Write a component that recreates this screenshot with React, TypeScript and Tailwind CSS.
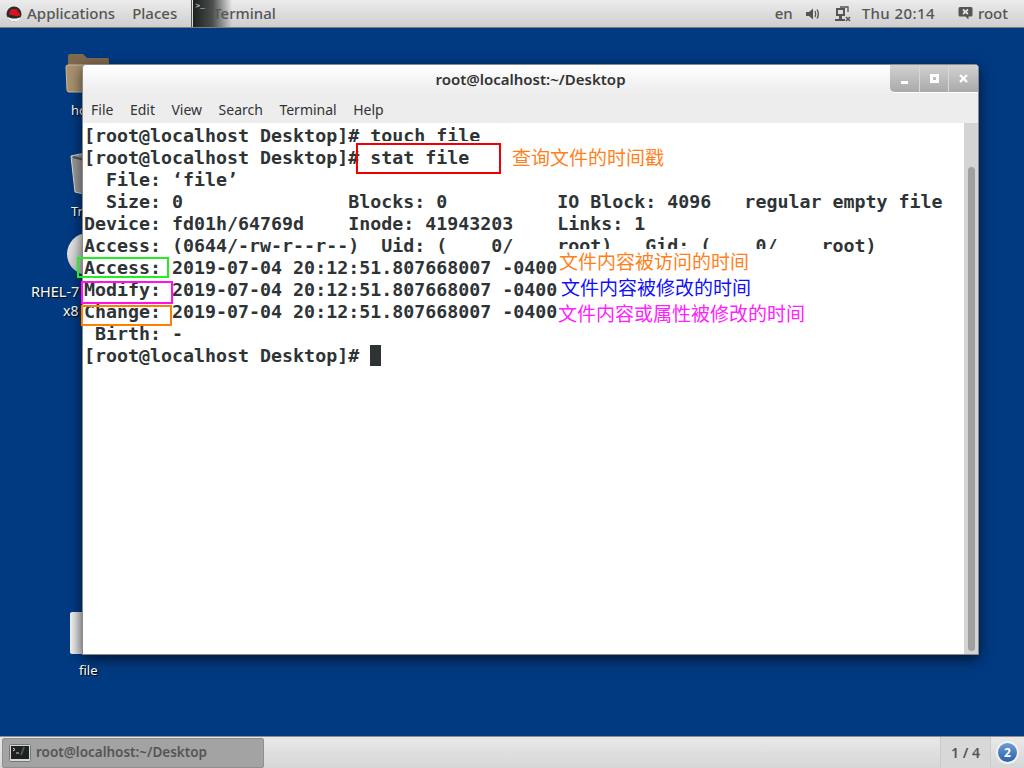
const termLines = [
  "[root@localhost Desktop]# touch file",
  "[root@localhost Desktop]# stat file",
  "  File: ‘file’",
  "  Size: 0               Blocks: 0          IO Block: 4096   regular empty file",
  "Device: fd01h/64769d    Inode: 41943203    Links: 1",
  "Access: (0644/-rw-r--r--)  Uid: (    0/    root)   Gid: (    0/    root)",
  "Access: 2019-07-04 20:12:51.807668007 -0400",
  "Modify: 2019-07-04 20:12:51.807668007 -0400",
  "Change: 2019-07-04 20:12:51.807668007 -0400",
  " Birth: -",
  "[root@localhost Desktop]# ",
];

function RedHat() {
  return (
    <svg width="16" height="16" viewBox="0 0 16 16" className="shrink-0">
      <circle cx="8" cy="8" r="7.5" fill="#2a2a2a" />
      <path d="M1 10.5 C4 13 12 13.5 15 10.5 C14 14.5 11 15.5 8 15.5 C5 15.5 2 14 1 10.5 Z" fill="#f4f4f4" />
      <path d="M3 8.5 C3.5 6.5 4 3.5 6 3 C7.5 2.7 8 3.7 9.5 3 C11 2.6 11.5 4.5 12 6 C13 6.7 14.5 7.5 14 9 C13.5 10.5 11 10.5 8 9.5 C6 8.8 3.5 9.5 3 8.5 Z" fill="#d9141c" />
    </svg>
  );
}

function TermIcon() {
  return (
    <svg width="22" height="18" viewBox="0 0 22 18" className="shrink-0">
      <rect x="0.5" y="0.5" width="21" height="17" rx="1" fill="#d8d8d8" stroke="#777" />
      <rect x="2" y="2" width="18" height="13" fill="#1c2220" />
      <path d="M4 4 L6 5.5 L4 7" fill="none" stroke="#ddd" />
      <path d="M7 9 H10" stroke="#ccc" />
      <path d="M12 11 L15 3" stroke="#555" strokeWidth="2" />
    </svg>
  );
}

function TopBar() {
  return (
    <div className="flex h-[28px] items-center border-b border-[#7d7d7d] bg-gradient-to-b from-[#ececec] to-[#cfcfcf] text-[15px] font-medium text-[#555] font-['Noto_Sans',sans-serif]">
      <div className="ml-[6px] flex items-center gap-[5px]">
        <RedHat />
        <span>Applications</span>
      </div>
      <span className="ml-[17px]">Places</span>
      <div className="ml-[14px] h-full w-[1px] bg-[#555]" />
      <div className="relative ml-[1px] flex h-full w-[120px] items-center">
        <div className="absolute inset-y-0 left-0 w-[39px] bg-gradient-to-r from-[#1c2220] via-[#4a4f4c] to-transparent">
          <span className="absolute left-[2px] top-[1px] font-['Liberation_Mono',monospace] text-[8px] leading-[10px] text-white">&gt;_</span>
        </div>
        <span className="relative ml-[20px]">Terminal</span>
      </div>
      <div className="ml-auto flex items-center">
        <span>en</span>
        <svg width="16" height="14" viewBox="0 0 16 14" className="ml-[12px]">
          <path d="M1 5 H4 L8 1.5 V12.5 L4 9 H1 Z" fill="#555" />
          <path d="M10 4 C11 6 11 8 10 10 M12 2.5 C13.8 5.5 13.8 8.5 12 11.5" fill="none" stroke="#555" strokeWidth="1.3" />
        </svg>
        <svg width="18" height="16" viewBox="0 0 18 16" className="ml-[12px]">
          <path d="M4 3 H11 V9 H4 Z" fill="none" stroke="#555" strokeWidth="2" />
          <path d="M7 1 H15 V6" fill="none" stroke="#555" strokeWidth="1.3" />
          <path d="M2 13 H12 V15 H2 Z M6 10 H9 V13 H6 Z" fill="#555" />
          <path d="M13 11 L17 15 M17 11 L13 15" stroke="#555" strokeWidth="1.5" />
        </svg>
        <span className="ml-[11px] tracking-[0.4px]">Thu 20:14</span>
        <svg width="15" height="15" viewBox="0 0 15 15" className="ml-[23px]">
          <path d="M2 1 H13 A1.500 1.500 0 0 1 14.500 2.500 V9 A1.500 1.500 0 0 1 13 10.500 H10.500 V13.500 L7.500 10.500 H2 A1.500 1.500 0 0 1 0.500 9 V2.500 A1.500 1.500 0 0 1 2 1 Z" fill="#555" />
          <path d="M5 3.500 L10 8 M10 3.500 L5 8" stroke="#e4e4e4" strokeWidth="1.700" />
        </svg>
        <span className="ml-[5px] mr-[16px]">root</span>
      </div>
    </div>
  );
}

function DesktopIcons() {
  return (
    <>
      <svg width="46" height="44" viewBox="0 0 46 44" className="absolute left-[65px] top-[24px]">
        <path d="M3 4 Q3 2 5 2 H18 L22 6 H42 Q44 6 44 8 V20 H3 Z" fill="#7f6a4e" />
        <path d="M1 15 Q1 13 3 13 H43 Q45 13 45 15 L44 38 Q44 40 42 40 H4 Q2 40 2 38 Z" fill="#a8926f" stroke="#cdbb9b" />
      </svg>
      <span className="absolute left-[71px] top-[74px] text-[13px] leading-[16px] text-white [text-shadow:1px_1px_1px_#000]">ho</span>
      <svg width="40" height="44" viewBox="0 0 40 44" className="absolute left-[68px] top-[124px]">
        <path d="M3 4 Q20 -1 37 4 L33 40 Q20 44 7 40 Z" fill="#9a9a9a" stroke="#ddd" />
        <path d="M5 5 Q20 10 35 5" fill="none" stroke="#555" strokeWidth="2" />
      </svg>
      <span className="absolute left-[71px] top-[175px] text-[13px] leading-[16px] text-white [text-shadow:1px_1px_1px_#000]">Tr</span>
      <div className="absolute left-[67px] top-[205px] h-[42px] w-[42px] rounded-full bg-gradient-to-br from-[#f2f2f2] to-[#a9a9a9]" />
      <span className="absolute left-[31px] top-[255px] text-[14.500px] leading-[16px] text-white [text-shadow:1px_1px_1px_#000]">RHEL-7</span>
      <span className="absolute left-[63px] top-[275px] text-[14px] leading-[16px] text-white [text-shadow:1px_1px_1px_#000]">x8</span>
      <div className="absolute left-[70px] top-[584px] h-[42px] w-[30px] rounded-[2px] bg-gradient-to-r from-[#f4f4f4] to-[#9d9d9d]" />
      <span className="absolute left-[79px] top-[634px] text-[13px] leading-[16px] text-white [text-shadow:1px_1px_1px_#000]">file</span>
    </>
  );
}

function WinButtons() {
  return (
    <div className="absolute right-0 top-0 flex h-[28px] w-[88px] overflow-hidden rounded-bl-[5px] rounded-tr-[4px] bg-gradient-to-b from-[#d2d2d2] to-[#a9a9a9] border-b border-white">
      <div className="flex flex-1 items-end justify-center border-r border-[#d8d8d8] pb-[8px]">
        <div className="h-[3px] w-[7px] bg-white" />
      </div>
      <div className="flex flex-1 items-center justify-center border-r border-[#d8d8d8]">
        <div className="h-[9px] w-[9px] border-[3px] border-white" />
      </div>
      <div className="flex flex-1 items-center justify-center">
        <svg width="9" height="9" viewBox="0 0 9 9">
          <path d="M1 1 L8 8 M8 1 L1 8" stroke="#fff" strokeWidth="2.400" />
        </svg>
      </div>
    </div>
  );
}

function Annotations() {
  return (
    <>
      {/* white strips pasted over the screenshot, they cut the text under them */}
      <div className="absolute left-[278px] top-[18px] h-[2px] w-[140px] bg-white" />
      <div className="absolute left-[474px] top-[126px] h-[10px] w-[270px] bg-white" />
      <div className="absolute left-[273px] top-[20px] h-[31px] w-[145px] border-2 border-[#ee0000]" />
      <span className="absolute left-[429px] top-[22px] text-[19px] leading-[26px] text-[#ff7f1a]">查询文件的时间戳</span>
      <span className="absolute left-[476px] top-[126px] text-[19px] leading-[26px] text-[#ff7f1a]">文件内容被访问的时间</span>
      <span className="absolute left-[478px] top-[152px] text-[19px] leading-[26px] text-[#1010ff]">文件内容被修改的时间</span>
      <span className="absolute left-[475px] top-[178px] text-[19px] leading-[26px] text-[#ff20ff]">文件内容或属性被修改的时间</span>
      <div className="absolute left-[-6px] top-[134px] h-[21px] w-[92px] border-2 border-[#22ee22]" />
      <div className="absolute left-[-2px] top-[158px] h-[23px] w-[92px] border-2 border-[#ff10ee]" />
      <div className="absolute left-[-2px] top-[182px] h-[21px] w-[91px] border-2 border-[#ff8000]" />
    </>
  );
}

function TerminalWindow() {
  return (
    <div className="absolute left-[82px] top-[36px] flex h-[591px] w-[897px] flex-col rounded-t-[4px] border border-[#8a8a8a] bg-white shadow-[0_4px_14px_rgba(0,0,0,0.65)]">
      <div className="relative flex h-[28px] shrink-0 items-center justify-center rounded-t-[4px] bg-gradient-to-b from-white to-[#ededed] text-[15px] font-semibold text-[#333] font-['Noto_Sans',sans-serif]">
        root@localhost:~/Desktop
        <WinButtons />
      </div>
      <div className="flex h-[30px] shrink-0 items-center gap-[16.500px] bg-[#ededed] pl-[8px] pt-[2px] text-[14px] text-[#333] font-['Noto_Sans',sans-serif]">
        <span>File</span>
        <span>Edit</span>
        <span>View</span>
        <span>Search</span>
        <span>Terminal</span>
        <span>Help</span>
      </div>
      <div className="flex min-h-0 flex-1">
        <div className="relative flex-1 bg-white pl-[1px] pt-[2px]">
          <pre className="font-['DejaVu_Sans_Mono',monospace] text-[18.3px] font-bold leading-[22px] text-[#2e3436]">
            {termLines.map((line, i) => (
              <div key={i} className="h-[22px]">
                {line}
                {i === termLines.length - 1 && <span className="inline-block h-[21px] w-[11px] align-top bg-[#2e3436]" />}
              </div>
            ))}
          </pre>
          <Annotations />
        </div>
        <div className="flex w-[14px] shrink-0 flex-col bg-[#d4d4d4] pt-[44px]">
          <div className="mx-auto h-[484px] w-[7px] rounded-full bg-[#a0a0a0]" />
        </div>
      </div>
    </div>
  );
}

function BottomBar() {
  return (
    <div className="flex h-[32px] items-center border-t border-[#8c8c8c] bg-gradient-to-b from-[#e8e8e8] to-[#d6d6d6] font-['Noto_Sans',sans-serif]">
      <div className="ml-[2px] flex h-[30px] w-[262px] items-center gap-[5px] rounded-[2px] border border-[#8f8f8f] bg-[#a3a3a3] pl-[6px] text-[13.500px] font-semibold text-[#555]">
        <TermIcon />
        <span>root@localhost:~/Desktop</span>
      </div>
      <div className="ml-auto flex h-full w-[51px] items-center justify-center bg-[#d8d8d8] border-x border-[#cbcbcb] text-[14px] font-semibold text-[#555]">
        1 / 4
      </div>
      <div className="mx-[5px] flex h-[23px] w-[23px] items-center justify-center rounded-full border-2 border-[#f2f2f2] bg-gradient-to-b from-[#6f9bd3] to-[#2a62a8] text-[12px] font-bold text-white">
        2
      </div>
    </div>
  );
}

export default function App() {
  return (
    <div className="flex h-[768px] w-[1024px] flex-col overflow-hidden bg-[#023a82] font-['Noto_Sans','Noto_Sans_CJK_SC',sans-serif]">
      <TopBar />
      <div className="relative flex-1">
        <DesktopIcons />
        <TerminalWindow />
      </div>
      <BottomBar />
    </div>
  );
}
